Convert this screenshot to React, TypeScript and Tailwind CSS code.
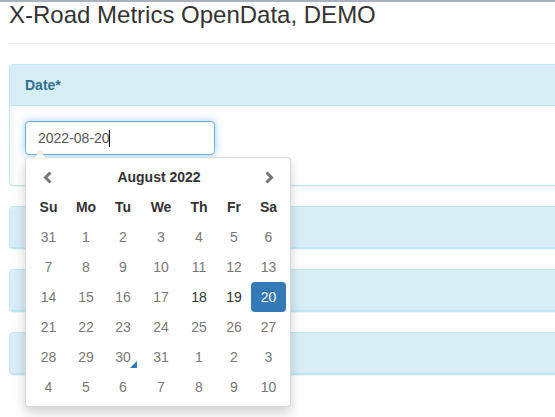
import React from "react";

const colWidths = "grid-cols-[37px_38px_36px_40px_36px_34px_35px]";

const dows = ["Su", "Mo", "Tu", "We", "Th", "Fr", "Sa"];

interface Day {
  n: number;
  state: "disabled" | "enabled" | "active";
  today?: boolean;
}

// August 2022, selectable range 18..20
const days: Day[] = [
  31, 1, 2, 3, 4, 5, 6, 7, 8, 9, 10, 11, 12, 13, 14, 15, 16, 17, 18, 19, 20, 21, 22, 23, 24, 25, 26, 27,
  28, 29, 30, 31, 1, 2, 3, 4, 5, 6, 7, 8, 9, 10,
].map((n, i) => {
  if (i === 20) return { n, state: "active" as const };
  if (i === 18 || i === 19) return { n, state: "enabled" as const };
  return { n, state: "disabled" as const, today: i === 30 };
});

function Chevron({ dir }: { dir: "left" | "right" }) {
  return (
    <svg width="10" height="13" viewBox="0 0 10 13" className="inline-block">
      <polyline
        points={dir === "left" ? "7.5,1.5 2.5,6.5 7.5,11.5" : "2.5,1.5 7.5,6.5 2.5,11.5"}
        fill="none"
        stroke="#777"
        strokeWidth="3"
      />
    </svg>
  );
}

function DatePicker() {
  return (
    <div className="absolute left-0 top-[36px] z-10 w-[266px] rounded-[4px] border border-black/15 bg-white p-[4px] shadow-[0_6px_12px_rgba(0,0,0,0.175)]">
      {/* arrow */}
      <div className="absolute -top-[7px] left-[7px] h-0 w-0 border-x-[7px] border-b-[7px] border-x-transparent border-b-[#ccc]" />
      <div className="absolute -top-[6px] left-[8px] h-0 w-0 border-x-[6px] border-b-[6px] border-x-transparent border-b-white" />

      <div className={`grid ${colWidths} text-center text-[14px] text-[#333]`}>
        <div className="flex h-[30px] items-center justify-center pr-[2px]">
          <Chevron dir="left" />
        </div>
        <div className="col-span-5 flex h-[30px] items-center justify-center font-bold">August 2022</div>
        <div className="flex h-[30px] items-center justify-center">
          <Chevron dir="right" />
        </div>

        {dows.map((d) => (
          <div key={d} className="flex h-[30px] items-center justify-center font-bold">
            {d}
          </div>
        ))}

        {days.map((d, i) => (
          <div
            key={i}
            className={
              "relative flex h-[30px] items-center justify-center rounded-[4px] " +
              (d.state === "active"
                ? "bg-[#337ab7] text-white [text-shadow:0_-1px_0_rgba(0,0,0,0.25)]"
                : d.state === "enabled"
                ? "text-[#333]"
                : "text-[#777]")
            }
          >
            {d.n}
            {d.today && (
              <span className="absolute bottom-[4px] right-[4px] h-0 w-0 border-l-[7px] border-b-[7px] border-l-transparent border-b-[#337ab7]" />
            )}
          </div>
        ))}
      </div>
    </div>
  );
}

// heading titles of these panels sit under the open picker
function CollapsedPanel() {
  return (
    <div className="mb-[20px] rounded-[4px] border border-[#bce8f1] bg-white shadow-[0_1px_1px_rgba(0,0,0,0.05)]">
      <div className="h-[41px] rounded-t-[3px] border-b border-b-[#bce8f1] bg-[#d9edf7] px-[15px] py-[10px]">
        <span className="mt-[4px] inline-block h-[8px] w-[2px] bg-[#8a7a6a]" />
      </div>
    </div>
  );
}

export default function App() {
  return (
    <div
      className="h-[417px] w-[555px] overflow-hidden border-t-2 border-t-[#a9b1bf] bg-white text-[14px] text-[#333]"
      style={{ fontFamily: '"Liberation Sans", Arial, sans-serif' }}
    >
      <div className="w-[640px] pl-[9px]">
        <h1 className="m-0 text-[24px] font-normal leading-[26.4px] text-[#333]">
          X-Road Metrics OpenData, DEMO
        </h1>
        <div className="mt-[15px] mb-[20px] border-t border-t-[#eee]" />

        <div className="mb-[20px] rounded-[4px] border border-[#bce8f1] bg-white shadow-[0_1px_1px_rgba(0,0,0,0.05)]">
          <div className="h-[41px] rounded-t-[3px] border-b border-b-[#bce8f1] bg-[#d9edf7] px-[15px] py-[10px] text-[14px] font-bold leading-[20px] text-[#31708f]">
            Date*
          </div>
          <div className="p-[15px]">
            <div className="relative mb-[15px] w-[190px]">
              <div className="flex h-[34px] items-center rounded-[4px] border border-[#66afe9] bg-white px-[12px] text-[14px] text-[#555] shadow-[inset_0_1px_1px_rgba(0,0,0,0.075),0_0_8px_rgba(102,175,233,0.6)]">
                <span>2022-08-20</span>
                <span className="ml-[-1px] inline-block h-[17px] w-px bg-[#111]" />
              </div>
              <DatePicker />
            </div>
          </div>
        </div>

        <CollapsedPanel />
        <CollapsedPanel />
        <CollapsedPanel />
      </div>
    </div>
  );
}
